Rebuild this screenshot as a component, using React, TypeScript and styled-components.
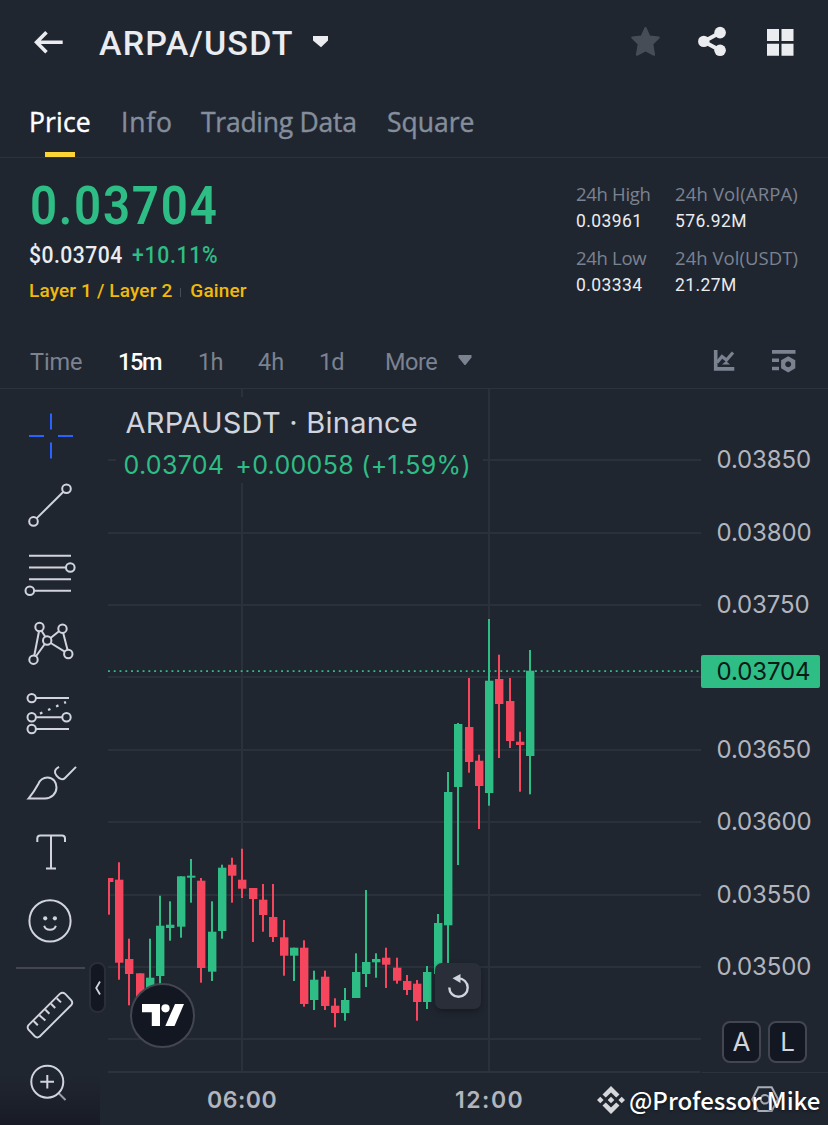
import React from "react";
import styled, { createGlobalStyle } from "styled-components";

const c = {
  bg: "#202630",
  line: "#2d333d",
  text: "#eaecef",
  muted: "#848e9c",
  dim: "#7b8290",
  green: "#2ebd85",
  red: "#f6465d",
  yellow: "#f0b90b",
  icon: "#d1d4dc",
  dark: "#131722",
};

const GlobalStyle = createGlobalStyle`
  * { box-sizing: border-box; }
  body { margin: 0; background: ${c.bg}; }
  svg { display: block; overflow: visible; flex: none; }
  button { background: none; border: 0; padding: 0; margin: 0; color: inherit; font: inherit; }
`;

const Page = styled.div`
  width: 828px;
  height: 1125px;
  overflow: hidden;
  background: ${c.bg};
  color: ${c.text};
  font-family: Roboto, "Liberation Sans", sans-serif;
  display: flex;
  flex-direction: column;
`;

const Header = styled.header`
  height: 87px;
  padding: 0 34px 2px;
  display: flex;
  align-items: center;
`;

const Pair = styled.h1`
  margin: 0 20px 0 36px;
  width: 193.5px;
  white-space: nowrap;
  font-size: 34px;
  font-weight: 500;
  line-height: 40px;
  letter-spacing: 1.2px;
`;

const HeaderActions = styled.div`
  margin: 0 0 1px auto;
  display: flex;
  align-items: center;
  gap: 38.5px;
`;

const Tabs = styled.nav`
  height: 71px;
  padding-left: 29px;
  display: flex;
  gap: 30px;
  border-bottom: 1px solid ${c.line};
`;

const Tab = styled.button<{ $active?: boolean; $w: number; $ls?: number }>`
  position: relative;
  width: ${(p) => p.$w}px;
  height: 70px;
  text-align: left;
  white-space: nowrap;
  font-family: "Open Sans", sans-serif;
  font-size: 26.5px;
  font-weight: 500;
  line-height: 69px;
  letter-spacing: ${(p) => p.$ls ?? 0}px;
  -webkit-text-stroke: 0.4px currentColor;
  color: ${(p) => (p.$active ? "#fff" : c.muted)};
  &::after {
    content: "";
    display: ${(p) => (p.$active ? "block" : "none")};
    position: absolute;
    left: 16px;
    bottom: 0;
    width: 30px;
    height: 5px;
    background: #fcd535;
  }
`;

const Summary = styled.section`
  height: 177px;
  padding: 19px 30px 0 29px;
  display: flex;
  justify-content: space-between;
`;

const PriceBlock = styled.div`
  display: flex;
  flex-direction: column;
`;

const BigPrice = styled.div`
  height: 58px;
  padding-left: 1px;
  line-height: 58px;
  font-size: 54px;
  font-weight: 600;
  letter-spacing: 2px;
  transform: scaleX(0.88);
  transform-origin: left;
  color: ${c.green};
`;

const FiatRow = styled.div`
  height: 40px;
  display: flex;
  align-items: center;
  gap: 10.5px;
  font-size: 23.5px;
  font-weight: 500;
  letter-spacing: 0.5px;
  transform: scaleX(0.9);
  transform-origin: left;
`;

const Change = styled.span`
  letter-spacing: 0.8px;
  color: ${c.green};
`;

const TagRow = styled.div`
  height: 31px;
  display: flex;
  align-items: center;
  font-size: 19px;
  font-weight: 500;
  letter-spacing: 0.15px;
  color: ${c.yellow};
`;

const TagDivider = styled.i`
  width: 1px;
  height: 9px;
  margin: 3px 9px 0 8px;
  background: #474d57;
`;

const Stats = styled.dl`
  margin: 2px 0 0;
  display: grid;
  grid-template-columns: 99px 123px;
  grid-auto-rows: 63.5px;
`;

const Stat = styled.div`
  white-space: nowrap;
  font-size: 19px;
`;

const StatLabel = styled.dt<{ $ls: number }>`
  line-height: 29px;
  font-family: "Open Sans", sans-serif;
  font-size: 18.5px;
  letter-spacing: ${(p) => p.$ls}px;
  color: ${c.dim};
`;

const StatValue = styled.dd`
  margin: 0;
  line-height: 26px;
  letter-spacing: 0.45px;
  transform: scaleX(0.92);
  transform-origin: left;
`;

const Intervals = styled.div`
  height: 54px;
  padding: 0 32px 0 30px;
  display: flex;
  align-items: center;
  border-bottom: 1px solid ${c.line};
`;

const Interval = styled.button<{ $active?: boolean; $w: number; $ls?: number }>`
  width: ${(p) => p.$w}px;
  text-align: left;
  white-space: nowrap;
  font-size: 23.5px;
  line-height: 52px;
  font-weight: ${(p) => (p.$active ? 500 : 400)};
  letter-spacing: ${(p) => p.$ls ?? 0}px;
  color: ${(p) => (p.$active ? "#fff" : c.dim)};
`;

const IntervalTools = styled.div`
  margin-left: auto;
  display: flex;
  align-items: center;
  gap: 37px;
  margin-top: -1px;
`;

const ChartArea = styled.main`
  flex: 1;
  display: flex;
  position: relative;
`;

const Toolbar = styled.aside`
  width: 100px;
  padding-top: 12.4px;
  background: linear-gradient(to bottom, transparent 0, transparent 685px, #181b25 736px);
`;

const ToolDivider = styled.hr`
  width: 69px;
  height: 2px;
  margin: 12px 0 12px 16px;
  border: 0;
  background: #434651;
`;

const ChartPane = styled.div`
  width: 728px;
  display: grid;
  grid-template-columns: 601px 127px;
  grid-template-rows: 684px 52px;
  font-family: Inter, sans-serif;
`;

const PriceAxis = styled.div`
  padding: 35.1px 0 0 14.5px;
  border-left: 1px solid transparent;
  border-bottom: 1px solid ${c.line};
`;

const AxisPrice = styled.div`
  height: 72.45px;
  line-height: 72.45px;
  font-size: 24px;
  letter-spacing: -0.12px;
  color: #b2b5be;
`;

const TimeAxis = styled.div`
  grid-column: 1 / 3;
  padding: 1px 0 0 107px;
  display: flex;
  align-items: center;
  gap: 180px;
  font-size: 23px;
  font-weight: 600;
  line-height: 52px;
  color: #b2b5be;
`;

const TimeLabel = styled.span<{ $ls: number }>`
  width: 68px;
  white-space: nowrap;
  letter-spacing: ${(p) => p.$ls}px;
`;

const Legend = styled.div`
  position: absolute;
  left: 116px;
  top: 8px;
  width: 367px;
  height: 86px;
  padding: 1px 0 0 7.5px;
  background: ${c.bg};
  font-family: Inter, sans-serif;
  white-space: nowrap;
`;

const LegendTitle = styled.div`
  padding-left: 2px;
  line-height: 50px;
  font-size: 29px;
  letter-spacing: 0.24px;
  color: ${c.icon};
`;

const LegendValues = styled.div`
  display: flex;
  gap: 11px;
  line-height: 35px;
  font-size: 25px;
  letter-spacing: 0.31px;
  color: ${c.green};
`;

const PriceTag = styled.div`
  position: absolute;
  left: 701px;
  top: 266px;
  width: 119px;
  height: 33px;
  padding-left: 15.5px;
  border-radius: 2px;
  background: ${c.green};
  color: #0c1a16;
  font: 24px/33px Inter, sans-serif;
  letter-spacing: -0.1px;
`;

const ScaleButtons = styled.div`
  position: absolute;
  left: 722px;
  top: 632px;
  display: flex;
  gap: 7px;
`;

const ScaleButton = styled.button`
  width: 39px;
  height: 42px;
  border: 2px solid #434651;
  border-radius: 8px;
  background: ${c.dark};
  color: ${c.icon};
  font: 26px/38px Inter, sans-serif;
`;

const CollapseHandle = styled.button`
  position: absolute;
  left: 89px;
  top: 573px;
  width: 17px;
  height: 51px;
  border: 2px solid #2a2e39;
  border-radius: 8px;
  background: ${c.dark};
  display: grid;
  place-items: center;
`;

const TradingBadge = styled.div`
  position: absolute;
  left: 130px;
  top: 593.5px;
  width: 65px;
  height: 65px;
  border: 2px solid #434651;
  border-radius: 50%;
  background: ${c.dark};
  display: grid;
  place-items: center;
`;

const ResetButton = styled.button`
  position: absolute;
  left: 435px;
  top: 574px;
  width: 46px;
  height: 46px;
  border-radius: 7px;
  background: #2a2e39;
  box-shadow: 0 3px 6px rgba(0, 0, 0, 0.3);
  display: grid;
  place-items: center;
`;

const AxisSettings = styled.div`
  position: absolute;
  left: 751px;
  top: 697px;
`;

const Watermark = styled.div`
  position: absolute;
  left: 597px;
  top: 691px;
  height: 40px;
  display: flex;
  align-items: center;
  gap: 4px;
  color: #fff;
  font: 500 24px/40px "Noto Sans CJK SC", sans-serif;
  white-space: nowrap;
  text-shadow: 0 1px 3px rgba(0, 0, 0, 0.6);
`;

/* [high, body top, body bottom, low, rising] */
type Candle = [number, number, number, number, 0 | 1];
const candles: Candle[] = [
  [878, 878, 882, 914.7, 0],
  [862.3, 879.7, 962.7, 979.7, 0],
  [938.7, 959, 974, 1005.3, 0],
  [973.3, 973.3, 999, 1004, 0],
  [938.7, 977.7, 996, 1000, 1],
  [895.7, 925.7, 976, 990, 1],
  [901.3, 924.7, 928, 940.7, 1],
  [876.3, 876.3, 926.7, 937.7, 1],
  [859, 875.7, 877.7, 902.7, 1],
  [878, 880.7, 968, 982.7, 0],
  [901.3, 931.7, 971.7, 981, 1],
  [864.7, 867.7, 931, 938.7, 1],
  [857.7, 864.7, 875.7, 902.7, 0],
  [848.7, 879.7, 888.7, 898, 0],
  [888, 888, 899, 942, 0],
  [884, 899.7, 915, 931.7, 0],
  [884, 917, 937, 942, 0],
  [920, 937.3, 955.7, 975.7, 0],
  [947.7, 947.7, 955.7, 981, 1],
  [940.3, 947.7, 1004, 1006.7, 0],
  [970.7, 979.7, 1000, 1010, 1],
  [970.7, 976.7, 1006, 1010, 0],
  [998.3, 1005.7, 1013, 1027.3, 0],
  [988, 1000, 1013, 1020.7, 1],
  [953.3, 972, 998, 998, 1],
  [890, 962, 974, 987, 1],
  [953.3, 959, 962.3, 977.7, 1],
  [947.7, 957.7, 964.7, 988, 0],
  [957.7, 967.7, 980.7, 983.7, 0],
  [975, 981, 990, 995, 0],
  [980, 983.7, 1002, 1020.7, 0],
  [966, 972, 1002, 1009, 1],
  [914, 923, 974, 990, 1],
  [772, 792, 925.3, 980, 1],
  [723, 724, 787, 865, 1],
  [678, 727, 762, 772.7, 0],
  [754.7, 760.7, 786, 829, 0],
  [619, 680.7, 793, 805.7, 1],
  [654.7, 679, 704, 758, 0],
  [678, 701, 741, 748, 0],
  [731.7, 741.7, 745, 791.7, 0],
  [650, 670.7, 756, 794.3, 1],
];

const gridRows = Array.from({ length: 9 }, (_, i) => Math.round(459.1 + i * 72.42));

function Plot() {
  return (
    <svg width="601" height="684" viewBox="100 389 601 684">
      <defs>
        <clipPath id="plot">
          <rect x="108" y="389" width="593" height="684" />
        </clipPath>
      </defs>
      <g fill="#2b313b" clipPath="url(#plot)">
        {gridRows.map((y) => (
          <rect key={y} x="108" y={y} width="593" height="2" />
        ))}
        <rect x="241" y="389" width="2" height="683" />
        <rect x="488" y="389" width="2" height="683" />
        <rect x="108" y="1071" width="592" height="2" fill={c.line} />
      </g>
      <g clipPath="url(#plot)">
        {candles.map(([hi, top, bottom, low, up], i) => {
          const x = Math.round(108.8 + i * 10.28);
          return (
            <g key={i} fill={up ? c.green : c.red}>
              <rect x={x - 1} y={hi} width="2" height={low - hi} />
              <rect x={x - 4} y={top} width="8.4" height={bottom - top} />
            </g>
          );
        })}
      </g>
      <path d="M108 671.2H701" stroke={c.green} strokeWidth="1.8" strokeDasharray="1.9 3.87" />
    </svg>
  );
}

const tools: React.ReactNode[] = [
  <g stroke="#2962ff" strokeWidth="2">
    <path d="M51 414v16M51 443v16M29 436.5h15M58 436.5h15" />
  </g>,
  <g>
    <circle cx="33.5" cy="521" r="4.3" />
    <circle cx="66.5" cy="488.3" r="4.3" />
    <path d="M36.6 518 63.4 491.4" />
  </g>,
  <g>
    <path d="M29 555.5H71M29 567.3H66M29 579H71M34 590.5H71" />
    <circle cx="70.3" cy="567.3" r="4.3" />
    <circle cx="29.8" cy="590.5" r="4.3" />
  </g>,
  <g>
    <circle cx="39.5" cy="627" r="4.2" />
    <circle cx="62.5" cy="628.7" r="4.2" />
    <circle cx="47.2" cy="640.5" r="4.2" />
    <circle cx="68.3" cy="654" r="4.2" />
    <circle cx="33.5" cy="659.7" r="4.2" />
    <path d="M39 631.2 34.3 655.5M41.5 630.8 45.3 636.8M50.6 638 59 631.3M63.2 633 67.5 649.8M50.7 643 64.7 651.6M44.8 644 36 656.3" />
  </g>,
  <g>
    <circle cx="31.7" cy="698.3" r="4.2" />
    <circle cx="31.7" cy="717.5" r="4.2" />
    <circle cx="66.5" cy="717.5" r="4.2" />
    <circle cx="31.7" cy="729.2" r="4.2" />
    <path d="M36 698.3H69M36 717.5H62.3M36 729.2H69" />
    <path d="M40 713.8 66 702.3" strokeDasharray="2.6 6.2" strokeWidth="2.3" />
  </g>,
  <g>
    <path d="M28.5 799Q34 792.5 38 785C40.5 779 44.5 778 47.5 778C53.5 778 56.5 783 56.5 788C56.5 794 51.5 798.8 45 798.8Z" />
    <path d="M59 767.2C55 769.2 53.5 772.5 56.5 776C60 780.2 63 780.4 65 778.4L76 767.3" />
  </g>,
  <g>
    <path d="M37.3 841.7V838Q37.3 835 40.3 835H62Q65 835 65 838V841.7M51 835V868M46 868H56" />
  </g>,
  <g>
    <circle cx="50" cy="920.7" r="20.6" />
    <circle cx="45.2" cy="918.1" r="2.1" fill={c.icon} stroke="none" />
    <circle cx="54.9" cy="918.1" r="2.1" fill={c.icon} stroke="none" />
    <path d="M44.2 925.6C45.5 931 54.5 931 55.8 925.6" />
  </g>,
];

interface ToolIconProps {
  y: number;
  height: number;
  children: React.ReactNode;
}
function ToolIcon({ y, height, children }: ToolIconProps) {
  return (
    <svg width="100" height={height} viewBox={`0 ${y} 100 ${height}`} fill="none" stroke={c.icon} strokeWidth="2">
      {children}
    </svg>
  );
}

const prices = ["0.03850", "0.03800", "0.03750", "", "0.03650", "0.03600", "0.03550", "0.03500"];

export default function App() {
  return (
    <Page>
      <GlobalStyle />
      <Header>
        <svg width="29" height="24" viewBox="34 30 29 24" fill="none" stroke={c.text} strokeWidth="3.6">
          <path d="M62.7 41.3H37M46.5 31.3 36.6 41.3 46.5 51.3" />
        </svg>
        <Pair>ARPA/USDT</Pair>
        <svg width="15" height="12" viewBox="0 0 15 12" fill={c.text}>
          <path d="M0 0H15V4.5L8 11.2L0 4.5Z" transform="translate(0 -1)" />
        </svg>
        <HeaderActions>
          <svg width="29" height="30" viewBox="630.5 28 29 30" fill="#474d57" stroke="#474d57" strokeWidth="2" strokeLinejoin="round">
            <path d="M645 29 648.9 37.4 658.3 38.5 651.8 45 653.6 55.8 645 51.4 636.4 55.8 638.2 45 631.7 38.5 641.1 37.4Z" />
          </svg>
          <svg width="29" height="30" viewBox="698.7 28 29 30" fill={c.text}>
            <path d="M720 33.5 703.5 42.4 720 51.5" fill="none" stroke={c.text} strokeWidth="4" />
            <circle cx="703.5" cy="42.4" r="5.7" />
            <circle cx="719.8" cy="33.6" r="5.8" />
            <circle cx="719.8" cy="51.3" r="5.8" />
          </svg>
          <svg width="28" height="28" viewBox="766 28 28 28" fill={c.text}>
            <path d="M767 29h12v12h-12zM781.5 29h12v12h-12zM767 43.7h12v12h-12zM781.5 43.7h12v12h-12z" />
          </svg>
        </HeaderActions>
      </Header>

      <Tabs>
        <Tab $active $w={62} $ls={0.15}>Price</Tab>
        <Tab $w={50} $ls={0.8}>Info</Tab>
        <Tab $w={156} $ls={-0.25}>Trading Data</Tab>
        <Tab $w={87}>Square</Tab>
      </Tabs>

      <Summary>
        <PriceBlock>
          <BigPrice>0.03704</BigPrice>
          <FiatRow>
            <span>$0.03704</span>
            <Change>+10.11%</Change>
          </FiatRow>
          <TagRow>
            <span>Layer 1 / Layer 2</span>
            <TagDivider />
            <span>Gainer</span>
          </TagRow>
        </PriceBlock>
        <Stats>
          <Stat>
            <StatLabel $ls={-0.3}>24h High</StatLabel>
            <StatValue>0.03961</StatValue>
          </Stat>
          <Stat>
            <StatLabel $ls={0.15}>24h Vol(ARPA)</StatLabel>
            <StatValue>576.92M</StatValue>
          </Stat>
          <Stat>
            <StatLabel $ls={-0.3}>24h Low</StatLabel>
            <StatValue>0.03334</StatValue>
          </Stat>
          <Stat>
            <StatLabel $ls={0.05}>24h Vol(USDT)</StatLabel>
            <StatValue>21.27M</StatValue>
          </Stat>
        </Stats>
      </Summary>

      <Intervals>
        <Interval $w={88} $ls={-0.1}>Time</Interval>
        <Interval $w={80} $ls={-1.3} $active>15m</Interval>
        <Interval $w={60} $ls={-0.8}>1h</Interval>
        <Interval $w={61}>4h</Interval>
        <Interval $w={66} $ls={-1}>1d</Interval>
        <Interval $w={73} $ls={-0.5}>More</Interval>
        <svg width="14" height="11" viewBox="0 0 14 11" fill={c.dim}>
          <path d="M0.5 0H13.5V2.5L7.5 10L6.5 10L0.5 2.5Z" transform="translate(0 -1)" />
        </svg>
        <IntervalTools>
          <svg width="22" height="22" viewBox="713 350 22 22" fill="none" stroke={c.dim} strokeWidth="3.6">
            <path d="M715.7 350V368.9H734.3" />
            <path d="M717 362.5 722 356.5 726.5 360 733 352.5" strokeWidth="3.2" />
            <path d="M726 361 730 364.5H722Z" fill={c.dim} stroke="none" />
          </svg>
          <svg width="24" height="22" viewBox="772 350 24 22" fill={c.dim}>
            <path d="M772 350H795.5V353.7H772zM772 358.5h7v3.6h-7zM772 366.7h7v3.6h-7z" />
            <path fillRule="evenodd" d="M788.2 356.3 795.3 360.3V368.3L788.2 372.4 781.1 368.3V360.3ZM788.2 361.3a3 3 0 1 0 .01 0Z" />
          </svg>
        </IntervalTools>
      </Intervals>

      <ChartArea>
        <Toolbar>
          {tools.map((shape, i) => (
            <ToolIcon key={i} y={401.4 + i * 69.2} height={69.2}>
              {shape}
            </ToolIcon>
          ))}
          <ToolDivider />
          <ToolIcon y={981} height={68}>
            <path
              d="M28.5 1025.2 60 993.7Q62.5 991.8 65 993.7L71.3 1000.4Q73.2 1003 71.3 1005L39.7 1036.5Q37.3 1038.3 35 1036.5L28.5 1029.7Q26.8 1027.3 28.5 1025.2Z"
              strokeWidth="1.9"
            />
            <path d="M33.6 1021 37.8 1025.3M39.4 1015.3 45.4 1020.6M45.2 1009.5 49.4 1013.8M51 1003.8 55.2 1008M56.7 998.2 61 1002.4" />
          </ToolIcon>
          <ToolIcon y={1049} height={68}>
            <circle cx="47.3" cy="1081.7" r="16" />
            <path d="M47.3 1075V1088.6M40.3 1081.7H54" />
            <path d="M58.5 1093 65.5 1100" opacity="0.7" />
          </ToolIcon>
        </Toolbar>

        <ChartPane>
          <Plot />
          <PriceAxis>
            {prices.map((p, i) => (
              <AxisPrice key={i}>{p}</AxisPrice>
            ))}
          </PriceAxis>
          <TimeAxis>
            <TimeLabel $ls={0.5}>06:00</TimeLabel>
            <TimeLabel $ls={1.5}>12:00</TimeLabel>
          </TimeAxis>
        </ChartPane>

        <Legend>
          <LegendTitle>ARPAUSDT · Binance</LegendTitle>
          <LegendValues>
            <span>0.03704</span>
            <span>+0.00058 (+1.59%)</span>
          </LegendValues>
        </Legend>
        <PriceTag>0.03704</PriceTag>
        <ScaleButtons>
          <ScaleButton>A</ScaleButton>
          <ScaleButton>L</ScaleButton>
        </ScaleButtons>
        <CollapseHandle>
          <svg width="6" height="14" viewBox="0 0 6 14" fill="none" stroke={c.icon} strokeWidth="1.8">
            <path d="M5 0.5 1.2 7 5 13.5" />
          </svg>
        </CollapseHandle>
        <TradingBadge>
          <svg width="42" height="22" viewBox="0 0 42 22" fill="#fff">
            <path d="M0 0H18V22H9.8V8.3H0Z" />
            <circle cx="23.5" cy="4.3" r="4.1" />
            <path d="M33 0H42L32.5 22H23.3Z" />
          </svg>
        </TradingBadge>
        <ResetButton>
          <svg width="22" height="26" viewBox="447 973.5 22 26" fill="none" stroke={c.icon} strokeWidth="2.4">
            <path d="M449.3 988A9.2 9.2 0 1 0 458.3 978.9" />
            <path d="M452.5 978.8 460.5 974.6V983.5Z" fill={c.icon} stroke="none" />
          </svg>
        </ResetButton>
        <AxisSettings>
          <svg width="28" height="27" viewBox="0 0 28 27" fill="none" stroke="#a9adb8" strokeWidth="2">
            <path d="M7.3 1.3H20.7L27 13.3 20.7 25H7.3L1.3 13.3Z" />
            <circle cx="14" cy="13.3" r="4.3" />
          </svg>
        </AxisSettings>
        <Watermark>
          <svg width="28" height="28" viewBox="0 0 28 28" fill="#d6d7da">
            <path d="M14 0 22.5 8.5 19.2 11.6 14 6.5 8.8 11.6 5.5 8.5ZM14 28 22.5 19.5 19.2 16.4 14 21.5 8.8 16.4 5.5 19.5ZM14 10.7 17.3 14 14 17.3 10.7 14ZM3.3 10.7 6.6 14 3.3 17.3 0 14ZM24.7 10.7 28 14 24.7 17.3 21.4 14Z" />
          </svg>
          <span>@Professor Mike</span>
        </Watermark>
      </ChartArea>
    </Page>
  );
}
